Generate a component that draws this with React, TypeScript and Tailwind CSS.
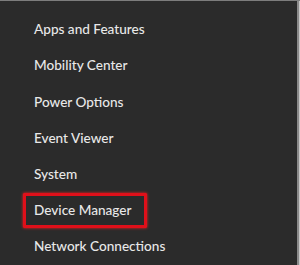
import React from "react";

const items = [
  "Apps and Features",
  "Mobility Center",
  "Power Options",
  "Event Viewer",
  "System",
  "Device Manager",
  "Network Connections",
];

export default function App() {
  return (
    <div className="w-[300px] h-[265px] overflow-hidden bg-[#2b2b2b] border-t border-t-[#7d7d7d] flex">
      <div className="flex-1 flex flex-col pt-[11px]" style={{ fontFamily: 'Lato, "Noto Sans", sans-serif' }}>
        {items.map((t) => (
          <div key={t} className="relative h-[36.67px] flex items-center pl-[34px]">
            {t === "Device Manager" && (
              <span className="absolute left-[23px] w-[124px] top-[0px] h-[35px] border-[3px] border-[#e0101a] rounded-[1px] shadow-[0_0_3px_#ff2020]" />
            )}
            <span className="relative text-[13.6px] font-medium text-[#e8e8e8] leading-none">{t}</span>
          </div>
        ))}
      </div>
      <div className="w-[2px] bg-[#8a8a8a]" />
      <div className="w-[1px] bg-[#c8c8c8]" />
    </div>
  );
}
